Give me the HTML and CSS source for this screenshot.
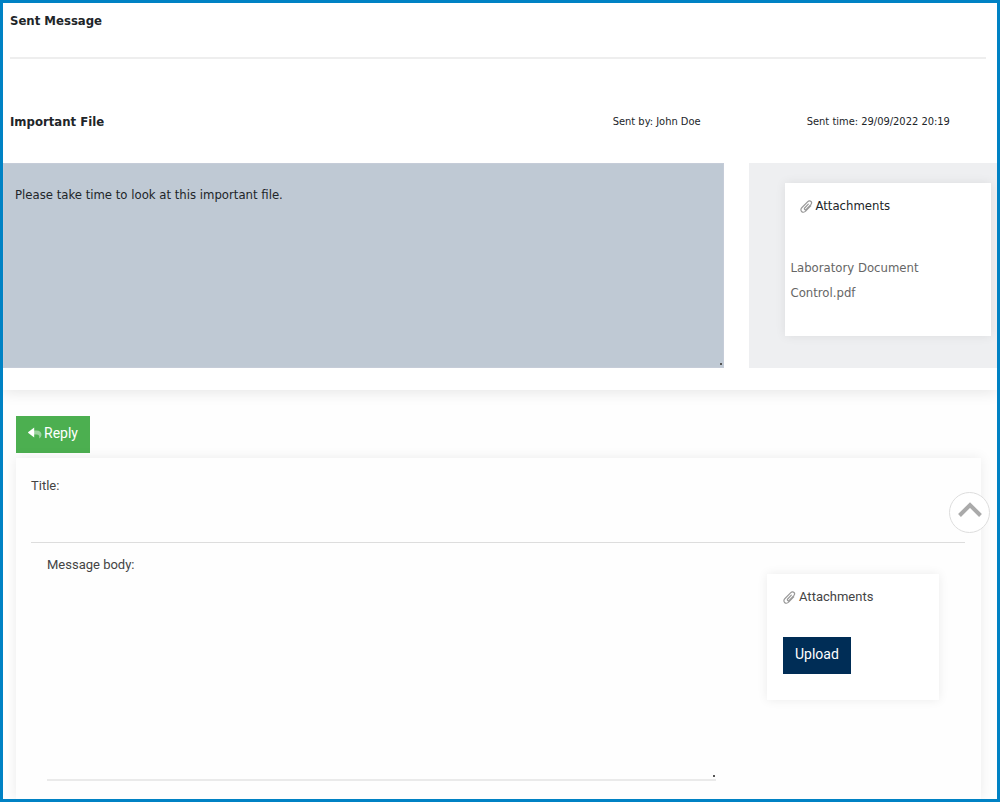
FILE: index.html
```html
<!DOCTYPE html>
<html lang="en">
<head>
  <meta charset="UTF-8">
  <meta name="viewport" content="width=device-width, initial-scale=1.0">
  <title>Sent Message</title>
  <link rel="stylesheet" href="styles.css">
</head>
<body>
  <svg class="sprite" aria-hidden="true">
    <symbol id="paperclip" viewBox="0 0 13 13">
      <path d="M8.300 4.200 4.700 8c-.5.6-.4 1.200 0 1.500.4.400 1 .3 1.500-.2l4.600-4.700c1-1.100 1-2.300.2-3.100-.9-.9-2.200-.8-3.200.2L2 7.500C.6 8.900.6 10.500 1.600 11.500c1.100 1.100 2.700 1 4-.3l5.100-5.300" fill="none" stroke="#999" stroke-width="1.200" stroke-linecap="round"/>
    </symbol>
  </svg>

  <section class="message">
    <h1 class="page-title">Sent Message</h1>

    <div class="message-head">
      <h2 class="subject">Important File</h2>
      <span class="sender">Sent by: John Doe</span>
      <span class="sent-time">Sent time: 29/09/2022 20:19</span>
    </div>

    <div class="message-row">
      <textarea class="message-text" aria-label="Message" readonly>Please take time to look at this important file.</textarea>
      <aside class="file-panel">
        <div class="card">
          <h3 class="card-title"><svg class="clip"><use href="#paperclip"/></svg>Attachments</h3>
          <a class="file-link" href="#">Laboratory Document Control.pdf</a>
        </div>
      </aside>
    </div>
  </section>

  <section class="reply">
    <button class="btn btn-reply" type="button">
      <svg class="reply-icon" viewBox="0 0 14 12" aria-hidden="true">
        <path d="M6 3.500h2.500c3.200 0 5 1.800 5 4 0 1.800-.9 3-2.300 4 .5-2.700-.3-4-2.700-4H6z" fill="#fff" opacity=".45"/>
        <path d="M6.200.6v9.800L.3 5.900a.6.600 0 0 1 0-.9z" fill="#fff"/>
      </svg>Reply
    </button>

    <form class="reply-form">
      <label class="label" for="title">Title:</label>
      <input class="title-input" type="text" id="title">

      <div class="compose">
        <div class="compose-main">
          <label class="label" for="body">Message body:</label>
          <textarea class="body-input" id="body"></textarea>
        </div>
        <div class="compose-side">
          <div class="card upload-card">
            <h3 class="card-title"><svg class="clip"><use href="#paperclip"/></svg>Attachments</h3>
            <button class="btn btn-upload" type="button">Upload</button>
          </div>
        </div>
      </div>
    </form>
  </section>

  <button class="to-top" type="button" aria-label="Back to top">
    <svg class="to-top-icon" viewBox="0 0 24 16" aria-hidden="true">
      <path d="M1.500 13.500 12 3l10.500 10.500" fill="none" stroke="#aaa" stroke-width="4"/>
    </svg>
  </button>
</body>
</html>
```

FILE: styles.css
```css
* {
  box-sizing: border-box;
}
body {
  margin: 0;
  min-height: 100vh;
  display: flex;
  flex-direction: column;
  border: 3px solid #0082c4;
  background: #fefefe;
  color: #212529;
  font-family: Tahoma, "DejaVu Sans Condensed", "DejaVu Sans", sans-serif;
  font-size: 13px;
}
h1, h2, h3 {
  margin: 0;
  font-size: 13px;
}
.sprite {
  display: none;
}

/* sent message */
.message {
  padding-bottom: 22px;
  background: #fff;
  box-shadow: 0 2px 14px rgba(0, 0, 0, 0.1);
}
.page-title {
  margin: 0 11px 0 7px;
  height: 56px;
  line-height: 36px;
  border-bottom: 2px solid #eee;
}
.message-head {
  display: flex;
  align-items: center;
  height: 104px;
  padding: 20px 7px 0;
}
.subject {
  flex: 0 0 61.5%;
}
.sender, .sent-time {
  font-size: 11px;
}
.sender {
  flex: 0 0 19.8%;
}
.message-row {
  display: flex;
  justify-content: space-between;
}
.message-text {
  width: 72.5%;
  height: 205px;
  padding: 19px 11px;
  border: 1px solid #c5ccd8;
  background: #bfc9d4;
  color: #212529;
  font: inherit;
  line-height: 24px;
  resize: vertical;
}
.file-panel {
  width: 25%;
  padding: 20px 6px 32px 36px;
  background: #eeeff1;
}
.card {
  background: #fff;
  box-shadow: 0 0 10px rgba(0, 0, 0, 0.08);
}
.file-panel .card {
  height: 100%;
  padding: 11px 6px;
}
.card-title {
  display: flex;
  align-items: center;
  gap: 3px;
  line-height: 24px;
  font-weight: 400;
}
.file-panel .card-title {
  padding-left: 9px;
  margin-bottom: 37px;
}
.clip {
  width: 13px;
  height: 13px;
}
.file-link {
  color: #666;
  line-height: 25px;
  text-decoration: none;
}

/* reply */
.reply {
  flex: 1;
  display: flex;
  flex-direction: column;
  align-items: flex-start;
  padding: 26px 16px 0 13px;
  font-family: Roboto, sans-serif;
  color: #444;
}
.btn {
  height: 37px;
  padding: 0 12px 3px;
  border: 0;
  color: #fff;
  font: 14px Roboto, sans-serif;
  cursor: pointer;
}
.btn-reply {
  display: flex;
  align-items: center;
  gap: 2px;
  background: #4caf50;
}
.reply-icon {
  width: 14px;
  height: 12px;
}
.btn-upload {
  background: #002d56;
}
.reply-form {
  flex: 1;
  width: 100%;
  margin-top: 5px;
  padding: 16px 16px 0 15px;
  background: #fefefe;
  box-shadow: 0 0 12px rgba(0, 0, 0, 0.08);
  clip-path: inset(-12px -16px 0 -13px);
}
.label {
  display: block;
  line-height: 24px;
}
.title-input {
  display: block;
  width: 100%;
  height: 45px;
  border: 0;
  border-bottom: 1px solid #ddd;
  background: transparent;
  font: inherit;
}
.compose {
  display: flex;
  padding: 10px 26px 0 16px;
}
.compose-main {
  flex: 0 0 75%;
}
.body-input {
  display: block;
  width: 100%;
  height: 204px;
  border: 0;
  border-bottom: 2px solid #eaeaea;
  background: transparent;
  font: inherit;
  resize: vertical;
}
.compose-side {
  flex: 1;
  padding: 21px 0 0 51px;
}
.upload-card {
  padding: 11px 16px 26px;
}
.upload-card .card-title {
  margin-bottom: 28px;
}
.message-text::-webkit-resizer, .body-input::-webkit-resizer {
  background: linear-gradient(#555, #555) 90% 85% / 2px 2px no-repeat;
}

.to-top {
  position: fixed;
  right: 10px;
  top: 492px;
  width: 41px;
  height: 41px;
  padding: 0 0 6px;
  border: 1px solid #ddd;
  border-radius: 50%;
  background: #fff;
  cursor: pointer;
}
.to-top-icon {
  display: block;
  width: 24px;
  height: 16px;
  margin: 0 auto;
}
```
